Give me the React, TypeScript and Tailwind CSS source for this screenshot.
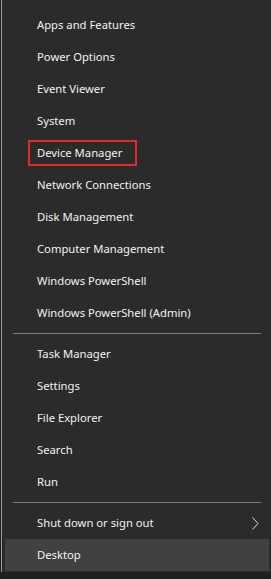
const groups: string[][] = [
    [
        'Apps and Features',
        'Power Options',
        'Event Viewer',
        'System',
        'Device Manager',
        'Network Connections',
        'Disk Management',
        'Computer Management',
        'Windows PowerShell',
        'Windows PowerShell (Admin)',
    ],
    ['Task Manager', 'Settings', 'File Explorer', 'Search', 'Run'],
];

const Item = ({ label }: { label: string }) => (
    <div className="h-8 flex items-center pl-[35px]">
        {label === 'Device Manager' ? (
            <span className="-ml-[9px] px-[7px] h-[26px] w-[109px] flex items-center border-2 border-[#e8262d]">
                {label}
            </span>
        ) : (
            <span>{label}</span>
        )}
    </div>
);

const Separator = () => (
    <div className="h-[9px] flex items-center pl-[11px] pr-[10px]">
        <div className="h-px w-full bg-[#7d7d7d]" />
    </div>
);

const App = () => {
    return (
        <div className="w-[271px] h-[579px] bg-[#1f1f1f] font-['Segoe_UI','Noto_Sans',sans-serif] text-[11.25px] text-[#f2f2f2]">
            <div className="h-[572px] bg-[#2b2b2b] border-l border-[#9a9a9a] ml-px pt-[9px]">
                {groups.map((g, i) => (
                    <div key={i}>
                        {i > 0 && <Separator />}
                        {g.map((label) => (
                            <Item key={label} label={label} />
                        ))}
                    </div>
                ))}
                <Separator />
                {/* 종료 메뉴 */}
                <div className="h-8 flex items-center pl-[35px] pr-[12px] justify-between">
                    <span>Shut down or sign out</span>
                    <svg width="7" height="13" viewBox="0 0 7 13" fill="none">
                        <path d="M0.5 0.5 L6 6.5 L0.5 12.5" stroke="#d8dde8" strokeWidth="1" />
                    </svg>
                </div>
                <div className="h-8 ml-[3px] mr-[2px] flex items-center pl-[32px] bg-[#414141]">
                    Desktop
                </div>
            </div>
        </div>
    );
};

export default App;
